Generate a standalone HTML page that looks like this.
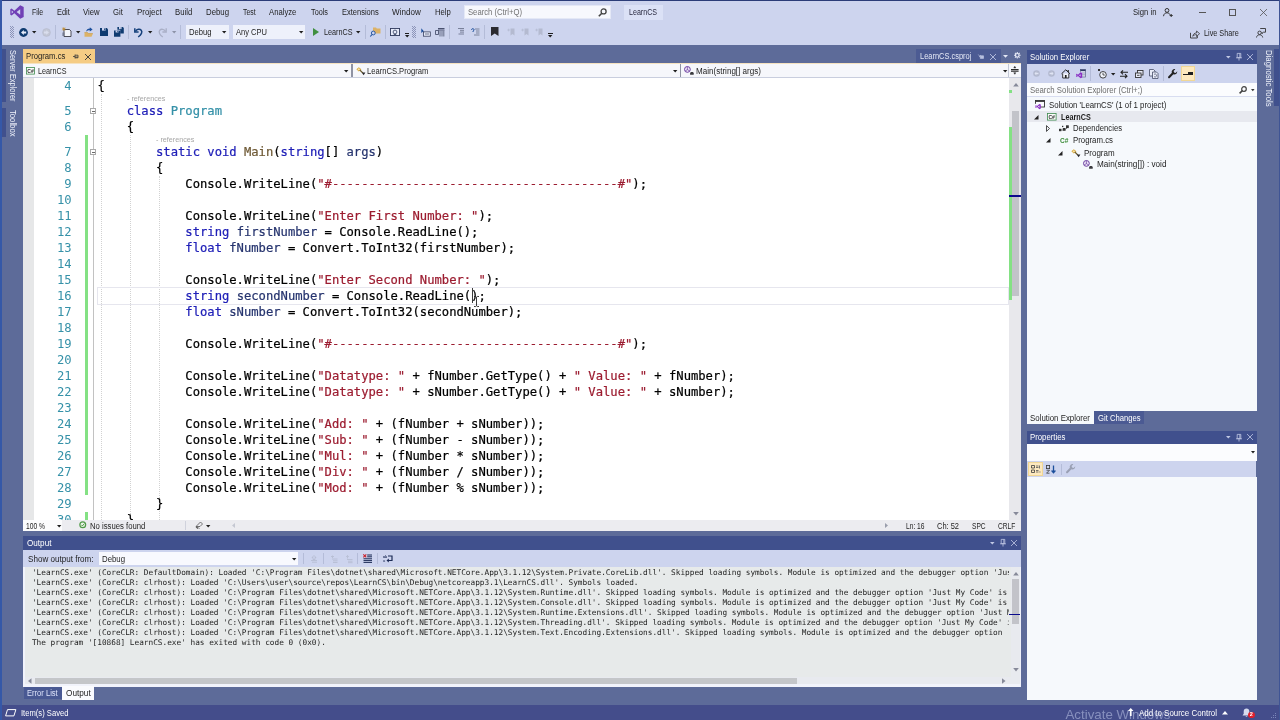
<!DOCTYPE html>
<html lang="en">
<head>
<meta charset="utf-8">
<title>LearnCS - Microsoft Visual Studio</title>
<style>
*{box-sizing:border-box;margin:0;padding:0}
html,body{width:1280px;height:720px;overflow:hidden}
body{background:#5d6b99;-webkit-font-smoothing:antialiased;font-family:"Liberation Sans","DejaVu Sans",sans-serif;font-size:11.5px;color:#1e1e1e;position:relative}
#root{position:absolute;left:0;top:0;width:1280px;height:720px;overflow:hidden;will-change:transform}
.abs{position:absolute}
.t{position:absolute;white-space:nowrap}
.w{color:#fff}
svg{position:absolute;overflow:visible}
/* top */
#top{left:0;top:0;width:1280px;height:45px;background:#cdd4ee}
#bt{left:0;top:0;width:1280px;height:1.4px;background:#2b3c78}
#bl{left:0;top:0;width:1.7px;height:720px;background:#3558a8}
#br{left:1278.6px;top:0;width:1.4px;height:720px;background:#3f5494}
.menu .t{top:5px;font-size:11.6px}
/* editor */
#tabrow-line{left:23px;top:62.5px;width:998px;height:1.2px;background:#f5e2c0}
#nav{left:23px;top:63.8px;width:998px;height:13.7px;background:#f6f7fb}
#editor{left:23px;top:77px;width:998px;height:442.5px;background:#fff;overflow:hidden}
#edstat{left:23px;top:519.5px;width:998px;height:11px;background:#ececf0}
.code{font-family:"DejaVu Sans Mono","Liberation Mono",monospace;font-size:12.18px;line-height:16px;height:16px;white-space:pre;position:absolute;left:74.4px;color:#000;-webkit-text-stroke:0.22px currentColor}
.ln{font-family:"DejaVu Sans Mono","Liberation Mono",monospace;font-size:12.18px;line-height:16px;height:16px;position:absolute;left:20.6px;width:28px;text-align:right;color:#3591a8}
.k{color:#2020b8}.ty{color:#3591a8}.s{color:#9c1c30}.m{color:#6f5a36}.v{color:#27356f}
.lens{position:absolute;font-size:7.2px;line-height:8px;color:#a6a6a6;white-space:nowrap}
/* output */
.out{font-family:"DejaVu Sans Mono","Liberation Mono",monospace;white-space:pre;position:absolute;color:#1e1e1e}
</style>
</head>
<body>
<div id="root">
<div class="abs" id="top"></div>
<div class="abs" id="bt"></div>

<svg style="left:10px;top:5px" width="14" height="14" viewBox="0 0 14 14"><path d="M10.2 0.3L13.7 2v10l-3.5 1.7L4.4 8.3 1.6 10.5 0.3 9.8V4.2l1.3-.7L4.4 5.7zM10.2 4.3L6.6 7l3.6 2.7zM1.7 5.4v3.2L3.3 7z" fill="#7040b6" fill-rule="evenodd"/></svg>
<span class="t" style="left:32.00px;top:6.00px;font-size:8.30px;line-height:12px;height:12px;color:#1e1e1e;transform:scaleX(0.8381);transform-origin:0 50%;">File</span>
<span class="t" style="left:57.00px;top:6.00px;font-size:8.30px;line-height:12px;height:12px;color:#1e1e1e;transform:scaleX(0.8940);transform-origin:0 50%;">Edit</span>
<span class="t" style="left:83.40px;top:6.00px;font-size:8.30px;line-height:12px;height:12px;color:#1e1e1e;transform:scaleX(0.9302);transform-origin:0 50%;">View</span>
<span class="t" style="left:113.40px;top:6.00px;font-size:8.30px;line-height:12px;height:12px;color:#1e1e1e;transform:scaleX(0.9224);transform-origin:0 50%;">Git</span>
<span class="t" style="left:136.80px;top:6.00px;font-size:8.30px;line-height:12px;height:12px;color:#1e1e1e;transform:scaleX(0.9530);transform-origin:0 50%;">Project</span>
<span class="t" style="left:175.00px;top:6.00px;font-size:8.30px;line-height:12px;height:12px;color:#1e1e1e;transform:scaleX(0.9314);transform-origin:0 50%;">Build</span>
<span class="t" style="left:206.20px;top:6.00px;font-size:8.30px;line-height:12px;height:12px;color:#1e1e1e;transform:scaleX(0.9409);transform-origin:0 50%;">Debug</span>
<span class="t" style="left:243.00px;top:6.00px;font-size:8.30px;line-height:12px;height:12px;color:#1e1e1e;transform:scaleX(0.8273);transform-origin:0 50%;">Test</span>
<span class="t" style="left:269.40px;top:6.00px;font-size:8.30px;line-height:12px;height:12px;color:#1e1e1e;transform:scaleX(0.9273);transform-origin:0 50%;">Analyze</span>
<span class="t" style="left:310.60px;top:6.00px;font-size:8.30px;line-height:12px;height:12px;color:#1e1e1e;transform:scaleX(0.8772);transform-origin:0 50%;">Tools</span>
<span class="t" style="left:341.70px;top:6.00px;font-size:8.30px;line-height:12px;height:12px;color:#1e1e1e;transform:scaleX(0.9042);transform-origin:0 50%;">Extensions</span>
<span class="t" style="left:392.40px;top:6.00px;font-size:8.30px;line-height:12px;height:12px;color:#1e1e1e;transform:scaleX(0.9747);transform-origin:0 50%;">Window</span>
<span class="t" style="left:435.20px;top:6.00px;font-size:8.30px;line-height:12px;height:12px;color:#1e1e1e;transform:scaleX(0.9263);transform-origin:0 50%;">Help</span>
<div class="abs" style="left:464px;top:5px;width:147px;height:14px;background:#f7f8fd;border:1px solid #e4e8f6"></div>
<span class="t" style="left:468.00px;top:6.00px;font-size:8.30px;line-height:12px;height:12px;color:#717171;transform:scaleX(0.9255);transform-origin:0 50%;">Search (Ctrl+Q)</span>
<svg style="left:598px;top:7.5px" width="9" height="9" viewBox="0 0 9 9"><circle cx="5.6" cy="3.4" r="2.5" fill="none" stroke="#424242" stroke-width="1.3"/><path d="M3.8 5.2L0.8 8.2" stroke="#424242" stroke-width="1.6"/></svg>
<div class="abs" style="left:624px;top:5px;width:38.5px;height:14.5px;background:#dbe1f6;"></div>
<span class="t" style="left:629.00px;top:6.00px;font-size:8.30px;line-height:12px;height:12px;color:#2a2a40;transform:scaleX(0.8551);transform-origin:0 50%;">LearnCS</span>
<span class="t" style="left:1132.80px;top:6.30px;font-size:8.30px;line-height:12px;height:12px;color:#1e1e1e;transform:scaleX(0.9253);transform-origin:0 50%;">Sign in</span>
<svg style="left:1162.5px;top:7.5px" width="10" height="9" viewBox="0 0 10 9"><circle cx="4" cy="2.4" r="1.9" fill="none" stroke="#333" stroke-width="1"/><path d="M0.5 8.2c.3-2.4 1.8-3.4 3.5-3.4s3.200 1 3.500 3.400" fill="none" stroke="#333" stroke-width="1"/><path d="M8.300 6v3M6.800 7.500h3" stroke="#333" stroke-width="0.9"/></svg>
<div class="abs" style="left:1198.5px;top:12px;width:7.2px;height:0.8px;background:#555;"></div>
<div class="abs" style="left:1229.4px;top:9.4px;width:6.6px;height:6.6px;background:transparent;border:0.8px solid #555"></div>
<svg style="left:1260px;top:9.3px" width="7" height="7" viewBox="0 0 7 7"><path d="M0 0L7 7M7 0L0 7" stroke="#555" stroke-width="0.8"/></svg>
<svg style="left:1189.7px;top:29.5px" width="10" height="8.5" viewBox="0 0 10 8.5"><path d="M0.5 2.800v5.200h6.800V6" fill="none" stroke="#333" stroke-width="0.9"/><path d="M2.800 6.300c.3-2.200 1.700-3.300 3.800-3.400V1l3 2.700-3 2.700V4.600c-1.700 0-2.900.5-3.800 1.700z" fill="none" stroke="#333" stroke-width="0.8"/></svg>
<span class="t" style="left:1203.70px;top:27.20px;font-size:8.30px;line-height:12px;height:12px;color:#1e1e1e;transform:scaleX(0.8771);transform-origin:0 50%;">Live Share</span>
<svg style="left:1255.5px;top:27.5px" width="10" height="10" viewBox="0 0 10 10"><path d="M4.200 0.500h5.300v3.700H7.500L6 5.600V4.200" fill="none" stroke="#333" stroke-width="0.9"/><circle cx="3.600" cy="4.800" r="1.700" fill="none" stroke="#333" stroke-width="0.9"/><path d="M0.500 9.500c.3-1.900 1.500-2.700 3.100-2.700s2.800.8 3.100 2.700" fill="none" stroke="#333" stroke-width="0.9"/></svg>
<svg style="left:10px;top:26px" width="4" height="12" viewBox="0 0 4 12"><rect x="0" y="0" width="1" height="1" fill="#8c94b8"/><rect x="2" y="0" width="1" height="1" fill="#8c94b8"/><rect x="1" y="1" width="1" height="1" fill="#8c94b8"/><rect x="3" y="1" width="1" height="1" fill="#8c94b8"/><rect x="0" y="2" width="1" height="1" fill="#8c94b8"/><rect x="2" y="2" width="1" height="1" fill="#8c94b8"/><rect x="1" y="3" width="1" height="1" fill="#8c94b8"/><rect x="3" y="3" width="1" height="1" fill="#8c94b8"/><rect x="0" y="4" width="1" height="1" fill="#8c94b8"/><rect x="2" y="4" width="1" height="1" fill="#8c94b8"/><rect x="1" y="5" width="1" height="1" fill="#8c94b8"/><rect x="3" y="5" width="1" height="1" fill="#8c94b8"/><rect x="0" y="6" width="1" height="1" fill="#8c94b8"/><rect x="2" y="6" width="1" height="1" fill="#8c94b8"/><rect x="1" y="7" width="1" height="1" fill="#8c94b8"/><rect x="3" y="7" width="1" height="1" fill="#8c94b8"/><rect x="0" y="8" width="1" height="1" fill="#8c94b8"/><rect x="2" y="8" width="1" height="1" fill="#8c94b8"/><rect x="1" y="9" width="1" height="1" fill="#8c94b8"/><rect x="3" y="9" width="1" height="1" fill="#8c94b8"/><rect x="0" y="10" width="1" height="1" fill="#8c94b8"/><rect x="2" y="10" width="1" height="1" fill="#8c94b8"/><rect x="1" y="11" width="1" height="1" fill="#8c94b8"/><rect x="3" y="11" width="1" height="1" fill="#8c94b8"/></svg>
<svg style="left:18.5px;top:27.5px" width="9" height="9" viewBox="0 0 9 9"><circle cx="4.500" cy="4.500" r="4.400" fill="#0f3b70"/><path d="M4.800 1.900L2 4.500l2.800 2.600V5.500h2.400V3.500H4.800z" fill="#e8eefc"/></svg>
<svg style="left:32.4px;top:30.999999999999996px" width="4.4" height="2.6" viewBox="0 0 4.4 2.6"><path d="M0 0h4.4 L2.2 2.6 z" fill="#1e1e1e"/></svg>
<svg style="left:41.5px;top:27.7px" width="9" height="9" viewBox="0 0 9 9"><circle cx="4.500" cy="4.500" r="3.900" fill="#c3c7d6" stroke="#b3b8cb" stroke-width="0.6"/><path d="M4.200 2.200L7 4.500 4.200 6.800V5.400H2V3.600h2.200z" fill="#d9dded"/></svg>
<div class="abs" style="left:55.2px;top:25px;width:1px;height:13.5px;background:#b4bcd8;"></div>
<svg style="left:62px;top:27px" width="10" height="10" viewBox="0 0 10 10"><path d="M2 2.500h5.500l1.500 1.600v5.400H2z" fill="#f4f6fc" stroke="#3b3b46" stroke-width="0.9"/><path d="M1.800 0.200v3.600M0 2h3.600M0.500 0.700l2.600 2.600M3.100 0.700L0.500 3.300" stroke="#c08b2c" stroke-width="0.7"/><path d="M0.300 5.500h2.200v3.500H0.300z" fill="#6a6f86" opacity="0.7"/></svg>
<svg style="left:75.8px;top:30.999999999999996px" width="4.4" height="2.6" viewBox="0 0 4.4 2.6"><path d="M0 0h4.4 L2.2 2.6 z" fill="#1e1e1e"/></svg>
<svg style="left:84px;top:27px" width="10" height="10" viewBox="0 0 10 10"><path d="M0.500 5.500h3l.8 1H9l-1.500 3.300H0.500z" fill="#dcb267"/><path d="M0.500 5.500h3l.8 1h4.500" fill="none" stroke="#c79a45" stroke-width="0.6"/><path d="M2.200 4.800C2.400 2.600 3.800 1.600 5.800 1.600V0.200L8.600 2.400 5.800 4.600V3.200C4.200 3.200 3.200 3.600 2.200 4.800z" fill="#1c4f9c"/></svg>
<svg style="left:100.3px;top:27.8px" width="8" height="8" viewBox="0 0 8 8"><path d="M0 0h6.800L8 1.200V8H0z" fill="#0f3b70"/><rect x="2" y="0" width="3.600" height="2.600" fill="#cdd4ee"/><rect x="4.200" y="0.400" width="1" height="1.800" fill="#0f3b70"/></svg>
<svg style="left:114px;top:27px" width="10" height="10" viewBox="0 0 10 10"><g transform="translate(3.400,0) scale(0.8)"><path d="M0 0h6.800L8 1.200V8H0z" fill="#0f3b70"/><rect x="2" y="0" width="3.600" height="2.600" fill="#cdd4ee"/><rect x="4.200" y="0.400" width="1" height="1.800" fill="#0f3b70"/></g><g transform="translate(0,3.400) scale(0.8)"><path d="M-0.800 -0.800h8.600v9.600h-8.600z" fill="#cdd4ee"/><path d="M0 0h6.800L8 1.200V8H0z" fill="#0f3b70"/><rect x="2" y="0" width="3.600" height="2.600" fill="#cdd4ee"/><rect x="4.200" y="0.400" width="1" height="1.800" fill="#0f3b70"/></g></svg>
<div class="abs" style="left:128.2px;top:25px;width:1px;height:13.5px;background:#b4bcd8;"></div>
<svg style="left:134px;top:26.5px" width="9" height="11" viewBox="0 0 9 11"><path d="M0.800 1.200v3.800h3.800" fill="none" stroke="#16417c" stroke-width="1.5"/><path d="M1.400 4.400C3 2 5.800 1.600 7.200 3.200c1.500 1.800.2 4.500-3 6.800" fill="none" stroke="#16417c" stroke-width="1.500"/></svg>
<svg style="left:148.20000000000002px;top:30.999999999999996px" width="4.4" height="2.6" viewBox="0 0 4.4 2.6"><path d="M0 0h4.4 L2.2 2.6 z" fill="#1e1e1e"/></svg>
<svg style="left:158px;top:26.5px" width="9" height="11" viewBox="0 0 9 11"><g transform="translate(9,0) scale(-1,1)"><path d="M0.800 1.200v3.800h3.800" fill="none" stroke="#a9afc6" stroke-width="1.300"/><path d="M1.400 4.400C3 2 5.800 1.600 7.200 3.200c1.500 1.800.2 4.500-3 6.800" fill="none" stroke="#a9afc6" stroke-width="1.300"/></g></svg>
<svg style="left:171.5px;top:30.999999999999996px" width="4.4" height="2.6" viewBox="0 0 4.4 2.6"><path d="M0 0h4.4 L2.2 2.6 z" fill="#8d93a8"/></svg>
<div class="abs" style="left:180px;top:25px;width:1px;height:13.5px;background:#b4bcd8;"></div>
<div class="abs" style="left:185.6px;top:25px;width:43px;height:14px;background:#eef1fb;"></div>
<span class="t" style="left:188.50px;top:25.80px;font-size:8.30px;line-height:12px;height:12px;color:#1e1e1e;transform:scaleX(0.9205);transform-origin:0 50%;">Debug</span>
<svg style="left:221.8px;top:30.999999999999996px" width="4.4" height="2.6" viewBox="0 0 4.4 2.6"><path d="M0 0h4.4 L2.2 2.6 z" fill="#1e1e1e"/></svg>
<div class="abs" style="left:232.8px;top:25px;width:72.4px;height:14px;background:#eef1fb;"></div>
<span class="t" style="left:235.50px;top:25.80px;font-size:8.30px;line-height:12px;height:12px;color:#1e1e1e;transform:scaleX(0.9087);transform-origin:0 50%;">Any CPU</span>
<svg style="left:299.1px;top:30.999999999999996px" width="4.4" height="2.6" viewBox="0 0 4.4 2.6"><path d="M0 0h4.4 L2.2 2.6 z" fill="#1e1e1e"/></svg>
<svg style="left:313px;top:28px" width="6" height="8" viewBox="0 0 6 8"><path d="M0 0L6 4 0 8z" fill="#3f8f3f"/></svg>
<span class="t" style="left:324.00px;top:25.80px;font-size:8.30px;line-height:12px;height:12px;color:#1e1e1e;transform:scaleX(0.8735);transform-origin:0 50%;">LearnCS</span>
<svg style="left:356.2px;top:30.999999999999996px" width="4.4" height="2.6" viewBox="0 0 4.4 2.6"><path d="M0 0h4.4 L2.2 2.6 z" fill="#1e1e1e"/></svg>
<div class="abs" style="left:364.5px;top:25px;width:1px;height:13.5px;background:#b4bcd8;"></div>
<svg style="left:370px;top:27px" width="11" height="10" viewBox="0 0 11 10"><path d="M3 0.500h3l.8 1H10.500V6.500H3z" fill="#dcb267"/><circle cx="3.300" cy="6" r="1.900" fill="#cdd4ee" stroke="#1c4f9c" stroke-width="0.9"/><path d="M2 7.500L0.300 9.500" stroke="#1c4f9c" stroke-width="1.100"/></svg>
<div class="abs" style="left:384.8px;top:25px;width:1px;height:13.5px;background:#b4bcd8;"></div>
<svg style="left:390px;top:28px" width="10" height="8" viewBox="0 0 10 8"><rect x="0.450" y="0.450" width="9.100" height="7.100" fill="#e6ebfa" stroke="#2f3a5c" stroke-width="0.9"/><circle cx="5" cy="4" r="1.900" fill="none" stroke="#2f3a5c" stroke-width="0.8"/><path d="M3.300 7.500c.2-1.400 3.200-1.400 3.400 0" fill="none" stroke="#2f3a5c" stroke-width="0.8"/></svg>
<div class="abs" style="left:405.1px;top:33.4px;width:4.4px;height:1px;background:#1e1e1e;"></div>
<svg style="left:405.1px;top:35.4px" width="4.4" height="2.4" viewBox="0 0 4.4 2.4"><path d="M0 0h4.4 L2.2 2.4 z" fill="#1e1e1e"/></svg>
<svg style="left:411.5px;top:26px" width="4" height="12" viewBox="0 0 4 12"><rect x="0" y="0" width="1" height="1" fill="#8c94b8"/><rect x="2" y="0" width="1" height="1" fill="#8c94b8"/><rect x="1" y="1" width="1" height="1" fill="#8c94b8"/><rect x="3" y="1" width="1" height="1" fill="#8c94b8"/><rect x="0" y="2" width="1" height="1" fill="#8c94b8"/><rect x="2" y="2" width="1" height="1" fill="#8c94b8"/><rect x="1" y="3" width="1" height="1" fill="#8c94b8"/><rect x="3" y="3" width="1" height="1" fill="#8c94b8"/><rect x="0" y="4" width="1" height="1" fill="#8c94b8"/><rect x="2" y="4" width="1" height="1" fill="#8c94b8"/><rect x="1" y="5" width="1" height="1" fill="#8c94b8"/><rect x="3" y="5" width="1" height="1" fill="#8c94b8"/><rect x="0" y="6" width="1" height="1" fill="#8c94b8"/><rect x="2" y="6" width="1" height="1" fill="#8c94b8"/><rect x="1" y="7" width="1" height="1" fill="#8c94b8"/><rect x="3" y="7" width="1" height="1" fill="#8c94b8"/><rect x="0" y="8" width="1" height="1" fill="#8c94b8"/><rect x="2" y="8" width="1" height="1" fill="#8c94b8"/><rect x="1" y="9" width="1" height="1" fill="#8c94b8"/><rect x="3" y="9" width="1" height="1" fill="#8c94b8"/><rect x="0" y="10" width="1" height="1" fill="#8c94b8"/><rect x="2" y="10" width="1" height="1" fill="#8c94b8"/><rect x="1" y="11" width="1" height="1" fill="#8c94b8"/><rect x="3" y="11" width="1" height="1" fill="#8c94b8"/></svg>
<svg style="left:421px;top:27.5px" width="10" height="9" viewBox="0 0 10 9"><path d="M0.300 0.300L3.300 3.800 1.800 3.800 0.300 5z" fill="#1c4f9c"/><rect x="2.500" y="3.900" width="6.800" height="4.300" fill="#e6ebfa" stroke="#3a4260" stroke-width="0.8"/><path d="M4 6h4" stroke="#3a4260" stroke-width="0.700"/></svg>
<svg style="left:435px;top:27.5px" width="10" height="9" viewBox="0 0 10 9"><path d="M0.500 2.500h3v4h-3z" fill="none" stroke="#3a4260" stroke-width="0.8"/><path d="M3 0.500h6.500M3 2h6.500" stroke="#3a4260" stroke-width="0.9"/><path d="M5 2.500v6M7 2.500v6M8.800 2.500v6" stroke="#6d7590" stroke-width="1.100"/></svg>
<div class="abs" style="left:449.2px;top:25px;width:1px;height:13.5px;background:#b4bcd8;"></div>
<svg style="left:457px;top:28px" width="8" height="7" viewBox="0 0 8 7"><path d="M1 0.500h6M3 2.300h4M3 4.100h4M1.500 6h5.500" stroke="#6f7790" stroke-width="0.9"/></svg>
<svg style="left:471px;top:27.5px" width="9" height="8" viewBox="0 0 9 8"><path d="M0.500 1.800c0-1.500 2.600-1.500 2.600 0 0 1-1.300 1-1.300 2.200" fill="none" stroke="#1c4f9c" stroke-width="1"/><path d="M4 1h4.500M5 3h3.500M5 5h3.500M3 7h5.500" stroke="#7d849c" stroke-width="1"/></svg>
<div class="abs" style="left:484.2px;top:25px;width:1px;height:13.5px;background:#b4bcd8;"></div>
<svg style="left:490.5px;top:27px" width="7.5" height="9" viewBox="0 0 7.5 9"><path d="M0 0h7.500v9L3.750 6.600 0 9z" fill="#2b2b30"/></svg>
<svg style="left:507px;top:27.5px" width="8" height="8" viewBox="0 0 8 8"><path d="M3.500 0.500h4v7L5.500 6 3.500 7.500z" fill="#b4bad0"/><path d="M0.300 2h2.600M1.600 0.700v2.600" stroke="#b4bad0" stroke-width="0.800"/></svg>
<svg style="left:521px;top:27.5px" width="8" height="8" viewBox="0 0 8 8"><path d="M3.500 0.500h4v7L5.500 6 3.500 7.500z" fill="#b4bad0"/><path d="M0.300 2h2.600M1.600 0.700v2.600" stroke="#b4bad0" stroke-width="0.800"/></svg>
<svg style="left:535px;top:27.5px" width="8" height="8" viewBox="0 0 8 8"><path d="M3.500 0.500h4v7L5.500 6 3.500 7.500z" fill="#b4bad0"/><path d="M0.300 2h2.600M1.600 0.700v2.600" stroke="#b4bad0" stroke-width="0.800"/></svg>
<div class="abs" style="left:548.3px;top:33.4px;width:4.4px;height:1px;background:#1e1e1e;"></div>
<svg style="left:548.3px;top:35.4px" width="4.4" height="2.4" viewBox="0 0 4.4 2.4"><path d="M0 0h4.4 L2.2 2.4 z" fill="#1e1e1e"/></svg>

<!-- EDITOR -->
<div class="abs" id="tabrow-line"></div>
<div class="abs" id="nav"></div>
<div class="abs" id="editor">
<div class="abs" style="left:0px;top:0px;width:11px;height:443px;background:#e6e7e8;"></div>
<div class="abs" style="left:62px;top:57.5px;width:3px;height:360.5px;background:#84e184;"></div>
<div class="abs" style="left:62px;top:435px;width:3px;height:8px;background:#84e184;"></div>
<div class="abs" style="left:70px;top:0px;width:0.8px;height:443px;background:#c2c2c2;"></div>
<div class="abs" style="left:77.6px;top:17px;width:0;height:426px;border-left:1px dotted #d2d2d2"></div>
<div class="abs" style="left:107px;top:58px;width:0;height:385px;border-left:1px dotted #d2d2d2"></div>
<div class="abs" style="left:136.3px;top:98.5px;width:0;height:344.5px;border-left:1px dotted #d2d2d2"></div>
<div class="abs" style="left:74px;top:210.10000000000002px;width:912px;height:17.6px;background:transparent;border:1.2px solid #e6e6ee"></div>
<div class="abs" style="left:67px;top:31px;width:6.4px;height:6.4px;background:#fff;border:0.8px solid #a9a9a9"></div>
<div class="abs" style="left:68.5px;top:33.8px;width:3.4px;height:0.8px;background:#6a6a6a;"></div>
<div class="abs" style="left:67px;top:72px;width:6.4px;height:6.4px;background:#fff;border:0.8px solid #a9a9a9"></div>
<div class="abs" style="left:68.5px;top:74.80000000000001px;width:3.4px;height:0.8px;background:#6a6a6a;"></div>
<span class="lens" style="left:104px;top:17.5px">- references</span>
<span class="lens" style="left:133px;top:58.5px">- references</span>
<span class="ln" style="top:1px">4</span>
<span class="code" style="top:1px">{</span>
<span class="ln" style="top:26px">5</span>
<span class="code" style="top:26px">    <span class="k">class</span> <span class="ty">Program</span></span>
<span class="ln" style="top:42px">6</span>
<span class="code" style="top:42px">    {</span>
<span class="ln" style="top:66.6px">7</span>
<span class="code" style="top:66.6px">        <span class="k">static</span> <span class="k">void</span> <span class="m">Main</span>(<span class="k">string</span>[] <span class="v">args</span>)</span>
<span class="ln" style="top:82.6px">8</span>
<span class="code" style="top:82.6px">        {</span>
<span class="ln" style="top:98.6px">9</span>
<span class="code" style="top:98.6px">            Console.WriteLine(<span class="s">"#---------------------------------------#"</span>);</span>
<span class="ln" style="top:114.6px">10</span>
<span class="ln" style="top:130.6px">11</span>
<span class="code" style="top:130.6px">            Console.WriteLine(<span class="s">"Enter First Number: "</span>);</span>
<span class="ln" style="top:146.6px">12</span>
<span class="code" style="top:146.6px">            <span class="k">string</span> <span class="v">firstNumber</span> = Console.ReadLine();</span>
<span class="ln" style="top:162.6px">13</span>
<span class="code" style="top:162.6px">            <span class="k">float</span> <span class="v">fNumber</span> = Convert.ToInt32(firstNumber);</span>
<span class="ln" style="top:178.6px">14</span>
<span class="ln" style="top:194.60000000000002px">15</span>
<span class="code" style="top:194.60000000000002px">            Console.WriteLine(<span class="s">"Enter Second Number: "</span>);</span>
<span class="ln" style="top:210.60000000000002px">16</span>
<span class="code" style="top:210.60000000000002px">            <span class="k">string</span> <span class="v">secondNumber</span> = Console.ReadLine();</span>
<span class="ln" style="top:226.60000000000002px">17</span>
<span class="code" style="top:226.60000000000002px">            <span class="k">float</span> <span class="v">sNumber</span> = Convert.ToInt32(secondNumber);</span>
<span class="ln" style="top:242.60000000000002px">18</span>
<span class="ln" style="top:258.6px">19</span>
<span class="code" style="top:258.6px">            Console.WriteLine(<span class="s">"#---------------------------------------#"</span>);</span>
<span class="ln" style="top:274.6px">20</span>
<span class="ln" style="top:290.6px">21</span>
<span class="code" style="top:290.6px">            Console.WriteLine(<span class="s">"Datatype: "</span> + fNumber.GetType() + <span class="s">" Value: "</span> + fNumber);</span>
<span class="ln" style="top:306.6px">22</span>
<span class="code" style="top:306.6px">            Console.WriteLine(<span class="s">"Datatype: "</span> + sNumber.GetType() + <span class="s">" Value: "</span> + sNumber);</span>
<span class="ln" style="top:322.6px">23</span>
<span class="ln" style="top:338.6px">24</span>
<span class="code" style="top:338.6px">            Console.WriteLine(<span class="s">"Add: "</span> + (fNumber + sNumber));</span>
<span class="ln" style="top:354.6px">25</span>
<span class="code" style="top:354.6px">            Console.WriteLine(<span class="s">"Sub: "</span> + (fNumber - sNumber));</span>
<span class="ln" style="top:370.6px">26</span>
<span class="code" style="top:370.6px">            Console.WriteLine(<span class="s">"Mul: "</span> + (fNumber * sNumber));</span>
<span class="ln" style="top:386.6px">27</span>
<span class="code" style="top:386.6px">            Console.WriteLine(<span class="s">"Div: "</span> + (fNumber / sNumber));</span>
<span class="ln" style="top:402.6px">28</span>
<span class="code" style="top:402.6px">            Console.WriteLine(<span class="s">"Mod: "</span> + (fNumber % sNumber));</span>
<span class="ln" style="top:418.6px">29</span>
<span class="code" style="top:418.6px">        }</span>
<span class="ln" style="top:434.6px">30</span>
<span class="code" style="top:434.6px">    }</span>
<div class="abs" style="left:448.7px;top:211px;width:1px;height:14.5px;background:#3c3c3c;"></div>
<svg style="left:450.4px;top:218.8px" width="7" height="11" viewBox="0 0 7 11"><path d="M1 0.500h1.700l.8.700.8-.7h1.700M3.500 1.200v8.600M1 10.500h1.700l.8-.7.8.700h1.700" fill="none" stroke="#222" stroke-width="0.900"/></svg>
<div class="abs" style="left:986px;top:0px;width:12px;height:443px;background:#e8e8ec;"></div>
<div class="abs" style="left:989.3px;top:33.5px;width:7px;height:185px;background:#c2c3c9;"></div>
<div class="abs" style="left:986px;top:13px;width:3px;height:3px;background:#84e184;"></div>
<div class="abs" style="left:986px;top:50px;width:3px;height:173px;background:#84e184;"></div>
<div class="abs" style="left:986px;top:118.30000000000001px;width:12px;height:1.5px;background:#0a0a8c;"></div>
<svg style="left:989.5px;top:5.5px" width="6" height="3.500" viewBox="0 0 8 5"><path d="M0 5L4 0l4 5z" fill="#868999"/></svg>
<svg style="left:989.5px;top:434.7px" width="6" height="3.500" viewBox="0 0 8 5"><path d="M0 0L4 5l4-5z" fill="#868999"/></svg>
</div>
<div class="abs" id="edstat"></div>
<div class="abs" style="left:2px;top:49px;width:4.2px;height:52.5px;background:#40508d;"></div>
<div class="abs" style="left:2px;top:108px;width:4.2px;height:29px;background:#40508d;"></div>
<span class="t" style="left:19.40px;top:49.80px;font-size:8.30px;line-height:12px;height:12px;color:#f0f3fc;transform-origin:0 0;transform:rotate(90deg) scaleX(0.8934)">Server Explorer</span>
<span class="t" style="left:19.40px;top:109.80px;font-size:8.30px;line-height:12px;height:12px;color:#f0f3fc;transform-origin:0 0;transform:rotate(90deg) scaleX(0.9268)">Toolbox</span>
<div class="abs" style="left:23px;top:49px;width:72px;height:14px;background:#f5cc84;"></div>
<span class="t" style="left:26.20px;top:50.30px;font-size:8.30px;line-height:12px;height:12px;color:#1e1e1e;transform:scaleX(0.9281);transform-origin:0 50%;">Program.cs</span>
<svg style="left:73px;top:54px" width="5.5" height="5" viewBox="0 0 5.5 5"><path d="M0 2.500h2M2 0.600v3.800M2 1.200h3v2.600h-3M2 3.100h3" fill="none" stroke="#3a3a3a" stroke-width="0.800"/></svg>
<svg style="left:85.2px;top:53.5px" width="6" height="6" viewBox="0 0 6 6"><path d="M0 0L6 6M6 0L0 6" stroke="#333" stroke-width="0.900"/></svg>
<div class="abs" style="left:916px;top:49px;width:84.6px;height:13.5px;background:#4c5b93;"></div>
<span class="t" style="left:919.70px;top:50.30px;font-size:8.30px;line-height:12px;height:12px;color:#e4e8f6;transform:scaleX(0.8971);transform-origin:0 50%;">LearnCS.csproj</span>
<svg style="left:978px;top:54px" width="6" height="5" viewBox="0 0 6 5"><path d="M0.300 0.500L2.500 3.200M1 2.800L3 1M2.300 1.800l3.200 0v2.600h-3.200z" fill="#b9c2e0" stroke="#b9c2e0" stroke-width="0.700"/></svg>
<svg style="left:990.2px;top:53.5px" width="6" height="6" viewBox="0 0 6 6"><path d="M0 0L6 6M6 0L0 6" stroke="#b9c2e0" stroke-width="0.900"/></svg>
<svg style="left:1002.7px;top:55.1px" width="5" height="2.8" viewBox="0 0 5 2.8"><path d="M0 0h5 L2.5 2.8 z" fill="#e4e8f6"/></svg>
<svg style="left:1014px;top:52.1px" width="6.6" height="6.6" viewBox="0 0 7 7"><circle cx="3.500" cy="3.500" r="1.900" fill="none" stroke="#e9ecf8" stroke-width="1.300"/><path d="M5.80 3.50L7.00 3.50" stroke="#e9ecf8" stroke-width="1.100"/><path d="M5.13 5.13L5.97 5.97" stroke="#e9ecf8" stroke-width="1.100"/><path d="M3.50 5.80L3.50 7.00" stroke="#e9ecf8" stroke-width="1.100"/><path d="M1.87 5.13L1.03 5.97" stroke="#e9ecf8" stroke-width="1.100"/><path d="M1.20 3.50L0.00 3.50" stroke="#e9ecf8" stroke-width="1.100"/><path d="M1.87 1.87L1.03 1.03" stroke="#e9ecf8" stroke-width="1.100"/><path d="M3.50 1.20L3.50 0.00" stroke="#e9ecf8" stroke-width="1.100"/><path d="M5.13 1.87L5.97 1.03" stroke="#e9ecf8" stroke-width="1.100"/></svg>
<div class="abs" style="left:23px;top:76.6px;width:998px;height:1px;background:#c9cede;"></div>
<svg style="left:26.2px;top:66.5px" width="9" height="7.5" viewBox="0 0 9 7.5"><rect x="0.400" y="0.400" width="8.200" height="6.700" fill="#fbfcfb" stroke="#3d8a4e" stroke-width="0.800"/><text x="1.300" y="5.600" font-family="Liberation Sans,sans-serif" font-size="5" font-weight="bold" fill="#2d2d2d">C#</text></svg>
<span class="t" style="left:37.50px;top:64.50px;font-size:8.30px;line-height:12px;height:12px;color:#1e1e1e;transform:scaleX(0.8704);transform-origin:0 50%;">LearnCS</span>
<svg style="left:344.1px;top:69.5px" width="4.4" height="2.6" viewBox="0 0 4.4 2.6"><path d="M0 0h4.4 L2.2 2.6 z" fill="#1e1e1e"/></svg>
<div class="abs" style="left:351.3px;top:64px;width:1.3px;height:12.6px;background:#8f93a3;"></div>
<svg style="left:355.5px;top:66.5px" width="9.5" height="8" viewBox="0 0 9.5 8"><path d="M0.400 2.300L2.800 0.300 5.400 2.300 2.800 4.500z" fill="#d9a93a"/><path d="M2.800 1.200L4.200 2.300 2.800 3.500 1.500 2.300z" fill="#f6e4b0"/><path d="M3.800 3L6.800 6" stroke="#6b5a2a" stroke-width="1.100"/><path d="M5.800 5.500h3.600L7.600 8.300z" fill="#26262a"/></svg>
<span class="t" style="left:366.70px;top:64.50px;font-size:8.30px;line-height:12px;height:12px;color:#1e1e1e;transform:scaleX(0.9163);transform-origin:0 50%;">LearnCS.Program</span>
<svg style="left:672.8px;top:69.5px" width="4.4" height="2.6" viewBox="0 0 4.4 2.6"><path d="M0 0h4.4 L2.2 2.6 z" fill="#1e1e1e"/></svg>
<div class="abs" style="left:679.6px;top:64px;width:1.3px;height:12.6px;background:#8f93a3;"></div>
<svg style="left:683.7px;top:66px" width="10.5" height="9" viewBox="0 0 10.5 9"><circle cx="3.400" cy="3.400" r="2.900" fill="#efe8f8" stroke="#6c3fa0" stroke-width="1"/><path d="M3.400 0.800v3M1.300 4.800L3.400 3.700 5.500 4.800" fill="none" stroke="#6c3fa0" stroke-width="0.700"/><path d="M6.100 7.300c0-1.800 3.600-1.800 3.600 0v1.400H6.100z" fill="#3a3a3e"/></svg>
<span class="t" style="left:695.50px;top:64.50px;font-size:8.30px;line-height:12px;height:12px;color:#1e1e1e;transform:scaleX(0.9716);transform-origin:0 50%;">Main(string[] args)</span>
<svg style="left:1002.5px;top:69.5px" width="4.4" height="2.6" viewBox="0 0 4.4 2.6"><path d="M0 0h4.4 L2.2 2.6 z" fill="#1e1e1e"/></svg>
<div class="abs" style="left:1008.4px;top:64px;width:1px;height:12.6px;background:#c3c8d6;"></div>
<svg style="left:1011.2px;top:66.2px" width="7.6" height="8.5" viewBox="0 0 7.6 8.5"><path d="M0 3.500h7.600M0 5.100h7.600" stroke="#2a2a2a" stroke-width="1.100"/><path d="M2.800 1.900L3.800 0.300l1 1.600zM2.800 6.700L3.800 8.300l1-1.600z" fill="#2a2a2a" stroke="#2a2a2a" stroke-width="0.500"/></svg>
<div class="abs" style="left:23px;top:519.5px;width:39.3px;height:11px;background:#fcfcfd;"></div>
<span class="t" style="left:25.50px;top:519.90px;font-size:8.30px;line-height:12px;height:12px;color:#1e1e1e;transform:scaleX(0.8075);transform-origin:0 50%;">100 %</span>
<svg style="left:57.0px;top:524.5px" width="4.4" height="2.6" viewBox="0 0 4.4 2.6"><path d="M0 0h4.4 L2.2 2.6 z" fill="#1e1e1e"/></svg>
<svg style="left:79.4px;top:521.3px" width="7.5" height="7.5" viewBox="0 0 7.5 7.5"><circle cx="3.750" cy="3.750" r="3.500" fill="#4f9a47"/><circle cx="3.750" cy="3.750" r="2.300" fill="#e9f4e6"/><path d="M2.300 3.800l1.100 1.100 2-2.300" fill="none" stroke="#3f8a38" stroke-width="0.900"/></svg>
<span class="t" style="left:90.40px;top:519.90px;font-size:8.30px;line-height:12px;height:12px;color:#1e1e1e;transform:scaleX(0.9292);transform-origin:0 50%;">No issues found</span>
<div class="abs" style="left:184.8px;top:520.5px;width:1px;height:9.5px;background:#d0d2dc;"></div>
<svg style="left:195.2px;top:521px" width="8" height="8" viewBox="0 0 8 8"><path d="M1 5.500L5.500 1 7.500 3 5 5.500z" fill="none" stroke="#555" stroke-width="0.800"/><path d="M1.200 5.800L3 7.600" stroke="#555" stroke-width="1.400"/><path d="M3.500 6.500l1 1.500" stroke="#555" stroke-width="0.600"/></svg>
<svg style="left:206.3px;top:524.5px" width="4.4" height="2.6" viewBox="0 0 4.4 2.6"><path d="M0 0h4.4 L2.2 2.6 z" fill="#1e1e1e"/></svg>
<svg style="left:231.5px;top:523px" width="3" height="5" viewBox="0 0 3 5"><path d="M3 0L0 2.500 3 5z" fill="#c5c8d2"/></svg>
<svg style="left:884.5px;top:523px" width="3" height="5" viewBox="0 0 3 5"><path d="M0 0L3 2.500 0 5z" fill="#9a9eac"/></svg>
<span class="t" style="left:906.00px;top:519.90px;font-size:8.30px;line-height:12px;height:12px;color:#1e1e1e;transform:scaleX(0.8018);transform-origin:0 50%;">Ln: 16</span>
<span class="t" style="left:937.00px;top:519.90px;font-size:8.30px;line-height:12px;height:12px;color:#1e1e1e;transform:scaleX(0.9000);transform-origin:0 50%;">Ch: 52</span>
<span class="t" style="left:972.00px;top:519.90px;font-size:8.30px;line-height:12px;height:12px;color:#1e1e1e;transform:scaleX(0.8000);transform-origin:0 50%;">SPC</span>
<span class="t" style="left:998.00px;top:519.90px;font-size:8.30px;line-height:12px;height:12px;color:#1e1e1e;transform:scaleX(0.8000);transform-origin:0 50%;">CRLF</span>

<div class="abs" style="left:23px;top:536px;width:998px;height:13.7px;background:#40508d;"></div>
<span class="t" style="left:26.60px;top:537.30px;font-size:8.30px;line-height:12px;height:12px;color:#fff;transform:scaleX(0.9799);transform-origin:0 50%;">Output</span>
<svg style="left:989.5px;top:541.9000000000001px" width="4.6" height="2.6" viewBox="0 0 4.6 2.6"><path d="M0 0h4.6 L2.3 2.6 z" fill="#c0c8e4"/></svg>
<svg style="left:1000.2px;top:539.3px" width="6" height="7.5" viewBox="0 0 6 7.5"><path d="M1.200 0.400h3.600v4.200h-3.600zM3.800 0.400v4.200M0 4.800h6M3 4.800v2.700" fill="none" stroke="#c0c8e4" stroke-width="0.800"/></svg>
<svg style="left:1011px;top:540.2px" width="6" height="6" viewBox="0 0 6 6"><path d="M0 0L6 6M6 0L0 6" stroke="#c0c8e4" stroke-width="0.800"/></svg>
<div class="abs" style="left:23px;top:549.7px;width:998px;height:17.3px;background:#cdd4ee;"></div>
<span class="t" style="left:28.40px;top:553.30px;font-size:8.30px;line-height:12px;height:12px;color:#1e1e1e;transform:scaleX(0.9740);transform-origin:0 50%;">Show output from:</span>
<div class="abs" style="left:98.8px;top:552px;width:199.4px;height:12.8px;background:#f8f9fe;"></div>
<span class="t" style="left:101.60px;top:553.30px;font-size:8.30px;line-height:12px;height:12px;color:#1e1e1e;transform:scaleX(0.9409);transform-origin:0 50%;">Debug</span>
<svg style="left:291.8px;top:558.3000000000001px" width="4.4" height="2.6" viewBox="0 0 4.4 2.6"><path d="M0 0h4.4 L2.2 2.6 z" fill="#1e1e1e"/></svg>
<div class="abs" style="left:302.6px;top:552.6px;width:1px;height:11.4px;background:#b4bcd8;"></div>
<svg style="left:309.5px;top:554.5px" width="8" height="8" viewBox="0 0 8 8"><path d="M4 0.500l2 2H5v2H3v-2H2zM1 5.500h6M2 7.200h5" fill="none" stroke="#b7bdd3" stroke-width="0.900"/></svg>
<div class="abs" style="left:322.6px;top:552.6px;width:1px;height:11.4px;background:#b4bcd8;"></div>
<svg style="left:329.8px;top:554.5px" width="8" height="8" viewBox="0 0 8 8"><path d="M1 1.500h3M2.500 0.500v2.500M2 4h5.500M3 5.800h4.500M3 7.500h4.500" fill="none" stroke="#b7bdd3" stroke-width="0.900"/></svg>
<svg style="left:344.5px;top:554.5px" width="8" height="8" viewBox="0 0 8 8"><path d="M2.500 0.500v3M1.200 1.800L2.500 0.500l1.300 1.300M2 4.500h5.500M3 6.200h4.500M3 7.700h4.500" fill="none" stroke="#b7bdd3" stroke-width="0.900"/></svg>
<div class="abs" style="left:357.3px;top:552.6px;width:1px;height:11.4px;background:#b4bcd8;"></div>
<svg style="left:363px;top:554.3px" width="9" height="9" viewBox="0 0 9 9"><path d="M4.200 1h4.800M4.200 2.800h4.800M0.500 4.800h8.500M0.500 6.600h8.500M0.500 8.400h8.500" stroke="#1b2a55" stroke-width="1"/><path d="M0.300 0.300l3 3M3.300 0.300l-3 3" stroke="#c8212b" stroke-width="1.100"/></svg>
<div class="abs" style="left:377.2px;top:552.6px;width:1px;height:11.4px;background:#b4bcd8;"></div>
<svg style="left:382.8px;top:555px" width="10" height="7.5" viewBox="0 0 10 7.5"><text x="0" y="3.200" font-family="Liberation Sans,sans-serif" font-size="3.600" font-weight="bold" fill="#1b2a55">ab</text><text x="0.300" y="6.800" font-family="Liberation Sans,sans-serif" font-size="3.600" font-weight="bold" fill="#1b2a55">c</text><path d="M5 1h4v4.500H4.500" fill="none" stroke="#1b2a55" stroke-width="1.200"/><path d="M5.800 3.500L3.500 5.500l2.300 2z" fill="#1b2a55"/></svg>
<div class="abs" style="left:23px;top:567px;width:998px;height:119.6px;background:#e7eaea;"></div>
<div class="abs" style="left:23px;top:567px;width:985.6px;height:110px;overflow:hidden">
<span class="out" style="left:8.9px;top:1.0px;font-size:7.765px;line-height:10px;height:10px">'LearnCS.exe' (CoreCLR: DefaultDomain): Loaded 'C:\Program Files\dotnet\shared\Microsoft.NETCore.App\3.1.12\System.Private.CoreLib.dll'. Skipped loading symbols. Module is optimized and the debugger option 'Just My Code' is enabled.</span>
<span class="out" style="left:8.9px;top:11.0px;font-size:7.765px;line-height:10px;height:10px">'LearnCS.exe' (CoreCLR: clrhost): Loaded 'C:\Users\user\source\repos\LearnCS\bin\Debug\netcoreapp3.1\LearnCS.dll'. Symbols loaded.</span>
<span class="out" style="left:8.9px;top:21.0px;font-size:7.765px;line-height:10px;height:10px">'LearnCS.exe' (CoreCLR: clrhost): Loaded 'C:\Program Files\dotnet\shared\Microsoft.NETCore.App\3.1.12\System.Runtime.dll'. Skipped loading symbols. Module is optimized and the debugger option 'Just My Code' is enabled.</span>
<span class="out" style="left:8.9px;top:31.0px;font-size:7.765px;line-height:10px;height:10px">'LearnCS.exe' (CoreCLR: clrhost): Loaded 'C:\Program Files\dotnet\shared\Microsoft.NETCore.App\3.1.12\System.Console.dll'. Skipped loading symbols. Module is optimized and the debugger option 'Just My Code' is enabled.</span>
<span class="out" style="left:8.9px;top:41.0px;font-size:7.765px;line-height:10px;height:10px">'LearnCS.exe' (CoreCLR: clrhost): Loaded 'C:\Program Files\dotnet\shared\Microsoft.NETCore.App\3.1.12\System.Runtime.Extensions.dll'. Skipped loading symbols. Module is optimized and the debugger option 'Just My Code' is enabled.</span>
<span class="out" style="left:8.9px;top:51.0px;font-size:7.765px;line-height:10px;height:10px">'LearnCS.exe' (CoreCLR: clrhost): Loaded 'C:\Program Files\dotnet\shared\Microsoft.NETCore.App\3.1.12\System.Threading.dll'. Skipped loading symbols. Module is optimized and the debugger option 'Just My Code' is enabled.</span>
<span class="out" style="left:8.9px;top:61.0px;font-size:7.765px;line-height:10px;height:10px">'LearnCS.exe' (CoreCLR: clrhost): Loaded 'C:\Program Files\dotnet\shared\Microsoft.NETCore.App\3.1.12\System.Text.Encoding.Extensions.dll'. Skipped loading symbols. Module is optimized and the debugger option 'Just My Code' is enabled.</span>
<span class="out" style="left:8.9px;top:71.0px;font-size:7.765px;line-height:10px;height:10px">The program '[10868] LearnCS.exe' has exited with code 0 (0x0).</span>
</div>
<div class="abs" style="left:1011px;top:567px;width:10px;height:110px;background:#e8eaef;"></div>
<div class="abs" style="left:1012.3px;top:578.7px;width:7px;height:45px;background:#c2c3c9;"></div>
<div class="abs" style="left:1008.7px;top:614px;width:12.3px;height:1.2px;background:#0a0a8c;"></div>
<svg style="left:1012.5px;top:571.5px" width="6" height="3.5" viewBox="0 0 8 5"><path d="M0 5L4 0l4 5z" fill="#868999"/></svg>
<svg style="left:1012.5px;top:667.5px" width="6" height="3.5" viewBox="0 0 8 5"><path d="M0 0L4 5l4-5z" fill="#868999"/></svg>
<div class="abs" style="left:23px;top:677px;width:998px;height:9px;background:#e8eaef;"></div>
<div class="abs" style="left:35px;top:678px;width:761.5px;height:6.1px;background:#c4c6c9;"></div>
<svg style="left:27.5px;top:678px" width="3.5" height="6" viewBox="0 0 5 8"><path d="M5 0L0 4l5 4z" fill="#868999"/></svg>
<svg style="left:1001.5px;top:678px" width="3.5" height="6" viewBox="0 0 5 8"><path d="M0 0L5 4l-5 4z" fill="#868999"/></svg>
<div class="abs" style="left:23px;top:684.1px;width:998px;height:2.7px;background:#f1f3fb;"></div>
<div class="abs" style="left:23px;top:567px;width:1.7px;height:119.8px;background:#f1f3fb;"></div>
<div class="abs" style="left:1019.8px;top:567px;width:1.4px;height:119.8px;background:#eef0f9;"></div>
<div class="abs" style="left:23.5px;top:686.8px;width:38.3px;height:12px;background:#495993;"></div>
<span class="t" style="left:26.70px;top:687.10px;font-size:8.30px;line-height:12px;height:12px;color:#dde3fa;transform:scaleX(0.9122);transform-origin:0 50%;">Error List</span>
<div class="abs" style="left:62px;top:685.6px;width:32px;height:14.1px;background:#fafbfe;"></div>
<span class="t" style="left:65.80px;top:687.10px;font-size:8.30px;line-height:12px;height:12px;color:#1e1e1e;transform:scaleX(0.9920);transform-origin:0 50%;">Output</span>

<div class="abs" style="left:1027px;top:50.2px;width:230.3px;height:13.6px;background:#40508d;"></div>
<span class="t" style="left:1029.70px;top:51.00px;font-size:8.30px;line-height:12px;height:12px;color:#fff;transform:scaleX(0.9382);transform-origin:0 50%;">Solution Explorer</span>
<svg style="left:1225.5px;top:55.7px" width="4.6" height="2.6" viewBox="0 0 4.6 2.6"><path d="M0 0h4.6 L2.3 2.6 z" fill="#c0c8e4"/></svg>
<svg style="left:1236.2px;top:53.2px" width="6" height="7.5" viewBox="0 0 6 7.5"><path d="M1.200 0.400h3.600v4.200h-3.600zM3.800 0.400v4.200M0 4.800h6M3 4.800v2.700" fill="none" stroke="#c0c8e4" stroke-width="0.800"/></svg>
<svg style="left:1247px;top:54px" width="6" height="6" viewBox="0 0 6 6"><path d="M0 0L6 6M6 0L0 6" stroke="#c0c8e4" stroke-width="0.800"/></svg>
<div class="abs" style="left:1027px;top:63.8px;width:230.3px;height:19.4px;background:#cdd4ee;"></div>
<svg style="left:1033.4px;top:70.2px" width="7" height="7" viewBox="0 0 7 7"><circle cx="3.500" cy="3.500" r="3.300" fill="#b3b9cf"/><path d="M3.300 1.500L1.500 3.500l1.800 2V4.200h2.200V2.800H3.300z" fill="#dfe4f3"/></svg>
<svg style="left:1047.7px;top:70.2px" width="7" height="7" viewBox="0 0 7 7"><circle cx="3.500" cy="3.500" r="3.300" fill="#b3b9cf"/><g transform="translate(7,0) scale(-1,1)"><path d="M3.300 1.500L1.500 3.500l1.800 2V4.200h2.200V2.800H3.300z" fill="#dfe4f3"/></g></svg>
<svg style="left:1061.2px;top:69px" width="9.5" height="9.5" viewBox="0 0 9.5 9.5"><path d="M0.500 4.800L4.750 0.800 9 4.800" fill="none" stroke="#222" stroke-width="1"/><path d="M1.700 4.500v4.500h6.100V4.500" fill="#f4f6fc" stroke="#222" stroke-width="0.900"/><rect x="3.900" y="6" width="1.700" height="3" fill="#222"/><rect x="6.600" y="1" width="1.200" height="2" fill="#222"/></svg>
<svg style="left:1075.6px;top:69px" width="10" height="9.5" viewBox="0 0 10 9.5"><rect x="4.400" y="0.500" width="5.200" height="7.500" fill="#dfe3f3" stroke="#5b6286" stroke-width="0.700"/><rect x="4.400" y="0.500" width="5.200" height="1.600" fill="#2f3a66"/><path d="M6 4h3M6 5.800h3" stroke="#8087a6" stroke-width="0.700"/><g transform="translate(0,3.200) scale(0.450)"><path d="M-1 -1h13v16h-13z" fill="#cdd4ee"/><path d="M10.2 0.3L13.7 2v10l-3.5 1.7L4.4 8.3 1.6 10.5 0.3 9.8V4.2l1.3-.7L4.4 5.700zM10.2 4.3L6.600 7l3.600 2.700zM1.700 5.400v3.200L3.300 7z" fill="#8a2fc4" fill-rule="evenodd"/></g></svg>
<div class="abs" style="left:1090.4px;top:66px;width:1px;height:15px;background:#b4bcd8;"></div>
<svg style="left:1097.5px;top:68.5px" width="9" height="10" viewBox="0 0 9 10"><circle cx="5" cy="5.800" r="3.300" fill="#f0f3fb" stroke="#333" stroke-width="0.900"/><path d="M5 3.800v2.200h1.800" fill="none" stroke="#333" stroke-width="0.800"/><rect x="0" y="0" width="2" height="2" fill="#333"/></svg>
<svg style="left:1110.5px;top:72.7px" width="4.4" height="2.6" viewBox="0 0 4.4 2.6"><path d="M0 0h4.4 L2.2 2.6 z" fill="#1e1e1e"/></svg>
<svg style="left:1120px;top:69.5px" width="8" height="8.5" viewBox="0 0 8 8.5"><path d="M8 2.300H1.200M3 0.300L1 2.300l2 2M0 6.200h6.800M5 4.200l2 2-2 2" fill="none" stroke="#222" stroke-width="1.100"/></svg>
<svg style="left:1135px;top:69.5px" width="8.5" height="8.5" viewBox="0 0 8.5 8.5"><rect x="2.500" y="0.500" width="5.500" height="4.500" fill="#e9ecf8" stroke="#333" stroke-width="0.900"/><rect x="0.500" y="3" width="5.500" height="4.500" fill="#e9ecf8" stroke="#333" stroke-width="0.900"/><path d="M2 5.300h2.500" stroke="#333" stroke-width="0.900"/></svg>
<svg style="left:1148.7px;top:68.8px" width="9.5" height="10" viewBox="0 0 9.5 10"><path d="M0.500 0.500h4l1.500 1.500v5h-5.500z" fill="#e9ecf8" stroke="#444b66" stroke-width="0.800"/><path d="M3.500 3h4l1.500 1.500v5h-5.500z" fill="#e9ecf8" stroke="#444b66" stroke-width="0.800"/><path d="M5 5.500c1-1 2.500-.5 2.500 1s-1.500 2-2.500 1" fill="none" stroke="#444b66" stroke-width="0.700"/></svg>
<div class="abs" style="left:1162.8px;top:66px;width:1px;height:15px;background:#b4bcd8;"></div>
<svg style="left:1168px;top:69px" width="9.5" height="9.5" viewBox="0 0 9.5 9.5"><path d="M9.300 2.200L7.600 3.900 6.100 3.400 5.600 1.900 7.300 0.200C6.300-0.100 5.200 0.100 4.500 0.900 3.700 1.700 3.500 2.800 3.900 3.800L0.300 7.400c-.4.400-.4 1.100 0 1.500s1.100.4 1.500 0l3.600-3.600c1 .4 2.100.2 2.900-.6.800-.7 1-1.800.7-2.800z" fill="#222"/></svg>
<div class="abs" style="left:1180.8px;top:65.5px;width:14.7px;height:15px;background:#fde9bf;border:0.6px solid #f1d795"></div>
<div class="abs" style="left:1183.3px;top:73.6px;width:5px;height:1px;background:#1e1e1e;"></div>
<div class="abs" style="left:1187.8px;top:72.3px;width:5.2px;height:2.6px;background:#1e1e1e;"></div>
<div class="abs" style="left:1027px;top:83.3px;width:230.3px;height:13.3px;background:#fbfcfe;"></div>
<span class="t" style="left:1030.00px;top:84.20px;font-size:8.30px;line-height:12px;height:12px;color:#6d6d6d;transform:scaleX(0.9396);transform-origin:0 50%;">Search Solution Explorer (Ctrl+;)</span>
<svg style="left:1239px;top:86.2px" width="8" height="8" viewBox="0 0 8 8"><circle cx="5" cy="3" r="2.300" fill="none" stroke="#424242" stroke-width="1.200"/><path d="M3.400 4.600L0.600 7.400" stroke="#424242" stroke-width="1.500"/></svg>
<svg style="left:1250.9px;top:88.5px" width="3.6" height="2.2" viewBox="0 0 3.6 2.2"><path d="M0 0h3.6 L1.8 2.2 z" fill="#3a3a3a"/></svg>
<div class="abs" style="left:1027px;top:96px;width:230.3px;height:1.2px;background:#d8ddf0;"></div>
<div class="abs" style="left:1027px;top:96.6px;width:230.3px;height:314.4px;background:#f6f9fc;"></div>
<div class="abs" style="left:1027px;top:111px;width:230.3px;height:11.3px;background:#e7e9ef;"></div>
<svg style="left:1035px;top:100px" width="10" height="9.5" viewBox="0 0 10 9.5"><rect x="0.500" y="0.500" width="9" height="6.500" fill="#fbfcfe" stroke="#333" stroke-width="0.900"/><rect x="0.500" y="0.500" width="9" height="1.400" fill="#333"/><g transform="translate(0.300,3.800) scale(0.400)"><path d="M-1 0h13v15h-13z" fill="#f6f9fc"/><path d="M10.2 0.3L13.7 2v10l-3.5 1.7L4.4 8.3 1.6 10.5 0.3 9.8V4.2l1.3-.7L4.4 5.700zM10.2 4.3L6.600 7l3.600 2.700zM1.700 5.400v3.200L3.300 7z" fill="#8a2fc4" fill-rule="evenodd"/></g></svg>
<span class="t" style="left:1048.70px;top:98.50px;font-size:8.30px;line-height:12px;height:12px;color:#1e1e1e;transform:scaleX(0.9456);transform-origin:0 50%;">Solution 'LearnCS' (1 of 1 project)</span>
<svg style="left:1033.7px;top:114.5px" width="4.5" height="4.5" viewBox="0 0 4.5 4.5"><path d="M4.500 0v4.500H0z" fill="#222"/></svg>
<svg style="left:1047.2px;top:112.8px" width="9.5" height="7.5" viewBox="0 0 9.5 7.5"><rect x="0.400" y="0.400" width="8.700" height="6.700" fill="#fbfcfb" stroke="#3d8a4e" stroke-width="0.800"/><text x="1.500" y="5.600" font-family="Liberation Sans,sans-serif" font-size="5" font-weight="bold" fill="#2d2d2d">C#</text></svg>
<span class="t" style="left:1060.60px;top:110.50px;font-size:8.30px;line-height:12px;height:12px;color:#1e1e1e;transform:scaleX(0.8706);transform-origin:0 50%;font-weight:bold;">LearnCS</span>
<svg style="left:1045.5px;top:124.9px" width="4" height="7" viewBox="0 0 4 7"><path d="M0.500 0.600L3.500 3.500 0.500 6.400z" fill="none" stroke="#222" stroke-width="0.800"/></svg>
<svg style="left:1059px;top:125px" width="10" height="7" viewBox="0 0 10 7"><rect x="0" y="3.800" width="2.400" height="2.400" fill="#333"/><rect x="3.800" y="3" width="2.800" height="2.800" fill="#333"/><rect x="7" y="0.300" width="2.800" height="2.800" fill="#333"/><rect x="3" y="0.800" width="1.300" height="1.300" fill="#333"/><path d="M2.400 5h1.400M6.600 4.400L8 3" stroke="#333" stroke-width="0.600"/></svg>
<span class="t" style="left:1072.70px;top:122.40px;font-size:8.30px;line-height:12px;height:12px;color:#1e1e1e;transform:scaleX(0.9232);transform-origin:0 50%;">Dependencies</span>
<svg style="left:1046px;top:138.4px" width="4.5" height="4.5" viewBox="0 0 4.5 4.5"><path d="M4.500 0v4.500H0z" fill="#222"/></svg>
<svg style="left:1060.2px;top:136.9px" width="8" height="7" viewBox="0 0 8 7"><text x="0" y="5.800" font-family="Liberation Sans,sans-serif" font-size="6.500" font-weight="bold" fill="#388a34">C#</text></svg>
<span class="t" style="left:1072.70px;top:134.40px;font-size:8.30px;line-height:12px;height:12px;color:#1e1e1e;transform:scaleX(0.9422);transform-origin:0 50%;">Program.cs</span>
<svg style="left:1058.2px;top:150.6px" width="4.5" height="4.5" viewBox="0 0 4.5 4.5"><path d="M4.500 0v4.500H0z" fill="#222"/></svg>
<svg style="left:1071px;top:148.6px" width="9.5" height="8" viewBox="0 0 9.5 8"><path d="M0.400 2.300L2.800 0.300 5.400 2.300 2.800 4.500z" fill="#d9a93a"/><path d="M2.800 1.200L4.200 2.300 2.800 3.500 1.500 2.300z" fill="#f6e4b0"/><path d="M3.800 3L6.800 6" stroke="#6b5a2a" stroke-width="1.100"/><path d="M5.800 5.500h3.600L7.600 8.300z" fill="#26262a"/></svg>
<span class="t" style="left:1084.40px;top:146.60px;font-size:8.30px;line-height:12px;height:12px;color:#1e1e1e;transform:scaleX(0.9613);transform-origin:0 50%;">Program</span>
<svg style="left:1083.3px;top:160px" width="10.5" height="9" viewBox="0 0 10.5 9"><circle cx="3.400" cy="3.400" r="2.900" fill="#efe8f8" stroke="#6c3fa0" stroke-width="1"/><path d="M3.400 0.800v3M1.300 4.800L3.400 3.700 5.500 4.800" fill="none" stroke="#6c3fa0" stroke-width="0.700"/><path d="M6.100 7.300c0-1.800 3.600-1.800 3.600 0v1.400H6.100z" fill="#3a3a3e"/></svg>
<span class="t" style="left:1096.70px;top:158.40px;font-size:8.30px;line-height:12px;height:12px;color:#1e1e1e;transform:scaleX(0.9845);transform-origin:0 50%;">Main(string[]) : void</span>
<div class="abs" style="left:1027px;top:411px;width:66.5px;height:13.4px;background:#f6f9fc;"></div>
<span class="t" style="left:1030.00px;top:412.20px;font-size:8.30px;line-height:12px;height:12px;color:#1e1e1e;transform:scaleX(0.9493);transform-origin:0 50%;">Solution Explorer</span>
<div class="abs" style="left:1093.8px;top:411px;width:50.2px;height:12.8px;background:#4b5a93;"></div>
<span class="t" style="left:1097.80px;top:412.20px;font-size:8.30px;line-height:12px;height:12px;color:#fff;transform:scaleX(0.9231);transform-origin:0 50%;">Git Changes</span>
<div class="abs" style="left:1027px;top:430.6px;width:230.3px;height:13.3px;background:#40508d;"></div>
<span class="t" style="left:1029.70px;top:431.30px;font-size:8.30px;line-height:12px;height:12px;color:#fff;transform:scaleX(0.9380);transform-origin:0 50%;">Properties</span>
<svg style="left:1225.5px;top:436.0px" width="4.6" height="2.6" viewBox="0 0 4.6 2.6"><path d="M0 0h4.6 L2.3 2.6 z" fill="#c0c8e4"/></svg>
<svg style="left:1236.2px;top:433.5px" width="6" height="7.5" viewBox="0 0 6 7.5"><path d="M1.200 0.400h3.600v4.200h-3.600zM3.800 0.400v4.200M0 4.800h6M3 4.800v2.700" fill="none" stroke="#c0c8e4" stroke-width="0.800"/></svg>
<svg style="left:1247px;top:434.3px" width="6" height="6" viewBox="0 0 6 6"><path d="M0 0L6 6M6 0L0 6" stroke="#c0c8e4" stroke-width="0.800"/></svg>
<div class="abs" style="left:1027px;top:443.9px;width:230.3px;height:17.2px;background:#fbfcfe;"></div>
<svg style="left:1250.7px;top:451.2px" width="4" height="2.4" viewBox="0 0 4 2.4"><path d="M0 0h4 L2.0 2.4 z" fill="#1e1e1e"/></svg>
<div class="abs" style="left:1027px;top:461px;width:229.3px;height:15.8px;background:#cdd4ee;"></div>
<div class="abs" style="left:1027px;top:476.8px;width:230.3px;height:223px;background:#f6f9fc;"></div>
<div class="abs" style="left:1028.4px;top:461.8px;width:14.9px;height:13.8px;background:#fde9bf;border:0.6px solid #f1d795"></div>
<svg style="left:1031px;top:464.5px" width="10" height="8.5" viewBox="0 0 10 8.5"><path d="M0.500 0.500h3v2.500h-3zM0.500 5h3v2.500h-3z" fill="none" stroke="#3b3b3b" stroke-width="0.800"/><path d="M5 1h2.500M5 2.500h2.500M8.500 0.500v3M5 5.500h2.500M5 7h2.500M8.300 7h1.200" stroke="#555" stroke-width="0.800"/></svg>
<svg style="left:1046.2px;top:464.5px" width="10.5" height="8.5" viewBox="0 0 10.5 8.5"><rect x="0.400" y="0.400" width="3.200" height="3.200" fill="none" stroke="#3b3b3b" stroke-width="0.800"/><path d="M0.500 5.200h3L0.500 8.200h3" fill="none" stroke="#3b3b3b" stroke-width="0.800"/><path d="M7.500 0.500v7M5.600 5.500l1.900 2.300 1.900-2.300" fill="none" stroke="#1c4f9c" stroke-width="1.300"/></svg>
<div class="abs" style="left:1061px;top:463.5px;width:1px;height:11.5px;background:#b4bcd8;"></div>
<svg style="left:1066.2px;top:464px" width="9.5" height="9.5" viewBox="0 0 9.5 9.5"><path d="M9.300 2.200L7.600 3.900 6.100 3.400 5.600 1.900 7.300 0.200C6.300-0.100 5.200 0.100 4.500 0.900 3.700 1.700 3.500 2.800 3.900 3.800L0.300 7.400c-.4.400-.4 1.100 0 1.500s1.100.4 1.500 0l3.600-3.600c1 .4 2.100.2 2.900-.6.800-.7 1-1.800.7-2.800z" fill="#9aa0b4"/></svg>
<span class="t" style="left:1274.50px;top:50.00px;font-size:8.30px;line-height:12px;height:12px;color:#f0f3fc;transform-origin:0 0;transform:rotate(90deg) scaleX(0.9403)">Diagnostic Tools</span>
<div class="abs" style="left:1274.2px;top:49px;width:4.4px;height:57.3px;background:#40508d;"></div>

<div class="abs" style="left:0px;top:704.6px;width:1280px;height:15.4px;background:#444d8b;"></div>
<svg style="left:4.5px;top:709px" width="11.5" height="7.5" viewBox="0 0 11.5 7.5"><path d="M2.500 0.600h8.400L8.900 6.900H0.600z" fill="none" stroke="#fff" stroke-width="1"/></svg>
<span class="t" style="left:20.50px;top:706.60px;font-size:8.30px;line-height:12px;height:12px;color:#fff;transform:scaleX(0.9193);transform-origin:0 50%;">Item(s) Saved</span>
<span class="t" style="left:1065.5px;top:705.8px;font-size:13.3px;line-height:17px;height:17px;color:rgba(190,198,232,0.55);letter-spacing:0">Activate Windows</span>
<svg style="left:1127.5px;top:708px" width="5.5" height="8" viewBox="0 0 5.5 8"><path d="M2.750 0L5.500 3H3.600v5H1.900V3H0z" fill="#fff"/></svg>
<span class="t" style="left:1139.40px;top:706.70px;font-size:8.30px;line-height:12px;height:12px;color:#fff;transform:scaleX(0.9550);transform-origin:0 50%;">Add to Source Control</span>
<svg style="left:1221.8px;top:710.8px" width="6" height="3.4" viewBox="0 0 6 3.4"><path d="M0 3.400L3 0l3 3.400z" fill="#fff"/></svg>
<svg style="left:1241.5px;top:707.5px" width="9" height="9.5" viewBox="0 0 9 9.5"><path d="M4.500 0.500c-1.800 0-2.800 1.300-2.800 3v2.300L0.500 7.500h8L7.300 5.800V3.500c0-1.700-1-3-2.800-3z" fill="#d6dbee"/><path d="M3.500 8.200c.3.900 1.700.9 2 0z" fill="#d6dbee"/></svg>
<div class="abs" style="left:1248px;top:711.500px;width:6.5px;height:6.5px;border-radius:50%;background:#e0202c"></div>
<span class="t" style="left:1249.7px;top:711.2px;font-size:5.5px;line-height:7px;height:7px;color:#fff;font-weight:bold">2</span>
<svg style="left:1271px;top:713px" width="5" height="5" viewBox="0 0 5 5"><path d="M4 0h1v1h-1zM2 2h1v1h-1zM4 2h1v1h-1zM0 4h1v1h-1zM2 4h1v1h-1zM4 4h1v1h-1z" fill="#7b86b8"/></svg>

<div class="abs" id="bl"></div>
<div class="abs" id="br"></div>
</div>
</body>
</html>
